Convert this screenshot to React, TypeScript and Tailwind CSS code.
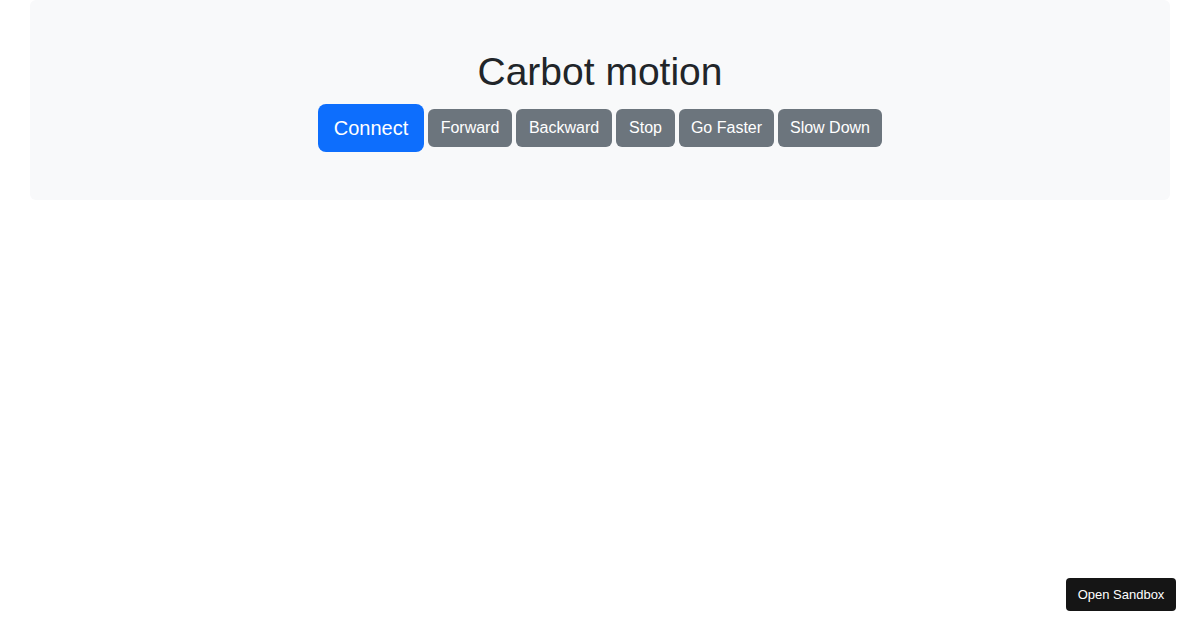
const buttons = [
  { label: "Forward", w: "w-[84px]" },
  { label: "Backward", w: "w-[96px]" },
  { label: "Stop", w: "w-[59px]" },
  { label: "Go Faster", w: "w-[95px]" },
  { label: "Slow Down", w: "w-[104px]" },
];

const App = () => {
  return (
    <div className="min-h-[630px] bg-white font-['Liberation_Sans',Arial,sans-serif] text-[#212529]">
      <div className="mx-auto w-[1140px]">
        <div className="rounded-md bg-[#f8f9fa] p-12 text-center">
          <h1 className="mb-2 text-[39px] font-normal leading-[48px]">Carbot motion</h1>
          <div className="flex items-center justify-center gap-1">
            <button className="h-12 w-[106px] rounded-lg bg-[#0d6efd] text-[20px] text-white">Connect</button>
            {buttons.map((b) => (
              <button key={b.label} className={`h-[38px] ${b.w} rounded-md bg-[#6c757d] text-base text-white`}>
                {b.label}
              </button>
            ))}
          </div>
        </div>
      </div>
      <button className="fixed bottom-[19px] right-6 h-[33px] w-[110px] rounded bg-[#151515] text-[13px] text-white">
        Open Sandbox
      </button>
    </div>
  );
};

export default App;
